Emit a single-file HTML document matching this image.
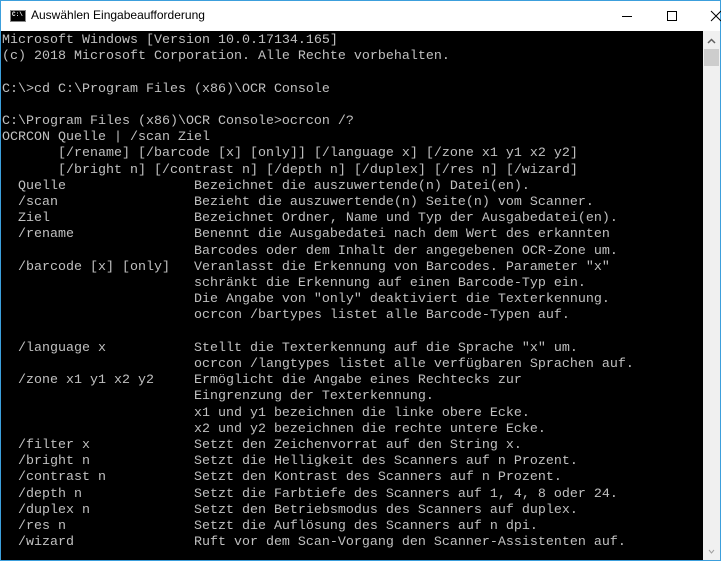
<!DOCTYPE html>
<html><head><meta charset="utf-8"><style>
html,body{margin:0;padding:0;width:721px;height:561px;overflow:hidden;background:#fff;}
.win{position:absolute;left:0;top:0;width:719px;height:559px;border:1px solid #3c9fdc;background:#fff;}
.title{position:absolute;left:0;top:0;width:719px;height:30px;background:#fff;}
.ttext{position:absolute;left:30px;top:7px;font:12px "Liberation Sans",sans-serif;color:#000;}
.icon{position:absolute;left:9px;top:9px;width:14px;height:10px;background:#000;border:1px solid #888;}
.icon span{position:absolute;left:1px;top:0;font:bold 6px "Liberation Mono",monospace;color:#fff;}
.con{position:absolute;left:0;top:30px;width:702px;height:529px;background:#000;overflow:hidden;}
pre{margin:0;position:absolute;left:1px;top:2px;font:13.33px/16.2px "Liberation Mono",monospace;color:#c0c0c0;}
.sb{position:absolute;left:702px;top:30px;width:17px;height:529px;background:#f0f0f0;}
.thumb{position:absolute;left:1px;top:18px;width:15px;height:17px;background:#cdcdcd;}
</style></head><body>
<div class="win">
<div class="title">
<div class="icon"><span>C:\</span></div>
<div class="ttext">Auswählen Eingabeaufforderung</div>
<svg style="position:absolute;left:540px;top:0" width="180" height="30">
<line x1="81" y1="15.5" x2="91" y2="15.5" stroke="#000" stroke-width="1"/>
<rect x="126.5" y="10.5" width="9" height="9" fill="none" stroke="#000"/>
<path d="M172 10 L182 20 M182 10 L172 20" stroke="#000" stroke-width="1" transform="translate(-2,0)"/>
</svg>
</div>
<div class="con"><pre>Microsoft Windows [Version 10.0.17134.165]
(c) 2018 Microsoft Corporation. Alle Rechte vorbehalten.

C:\&gt;cd C:\Program Files (x86)\OCR Console

C:\Program Files (x86)\OCR Console&gt;ocrcon /?
OCRCON Quelle | /scan Ziel
       [/rename] [/barcode [x] [only]] [/language x] [/zone x1 y1 x2 y2]
       [/bright n] [/contrast n] [/depth n] [/duplex] [/res n] [/wizard]
  Quelle                Bezeichnet die auszuwertende(n) Datei(en).
  /scan                 Bezieht die auszuwertende(n) Seite(n) vom Scanner.
  Ziel                  Bezeichnet Ordner, Name und Typ der Ausgabedatei(en).
  /rename               Benennt die Ausgabedatei nach dem Wert des erkannten
                        Barcodes oder dem Inhalt der angegebenen OCR-Zone um.
  /barcode [x] [only]   Veranlasst die Erkennung von Barcodes. Parameter "x"
                        schränkt die Erkennung auf einen Barcode-Typ ein.
                        Die Angabe von "only" deaktiviert die Texterkennung.
                        ocrcon /bartypes listet alle Barcode-Typen auf.

  /language x           Stellt die Texterkennung auf die Sprache "x" um.
                        ocrcon /langtypes listet alle verfügbaren Sprachen auf.
  /zone x1 y1 x2 y2     Ermöglicht die Angabe eines Rechtecks zur
                        Eingrenzung der Texterkennung.
                        x1 und y1 bezeichnen die linke obere Ecke.
                        x2 und y2 bezeichnen die rechte untere Ecke.
  /filter x             Setzt den Zeichenvorrat auf den String x.
  /bright n             Setzt die Helligkeit des Scanners auf n Prozent.
  /contrast n           Setzt den Kontrast des Scanners auf n Prozent.
  /depth n              Setzt die Farbtiefe des Scanners auf 1, 4, 8 oder 24.
  /duplex n             Setzt den Betriebsmodus des Scanners auf duplex.
  /res n                Setzt die Auflösung des Scanners auf n dpi.
  /wizard               Ruft vor dem Scan-Vorgang den Scanner-Assistenten auf.</pre></div>
<div class="sb">
<svg style="position:absolute;left:0;top:0" width="17" height="529">
<path d="M5 12 L8.5 8.5 L12 12" fill="none" stroke="#606060" stroke-width="1.5"/>
<path d="M6 519 L8.5 522 L11 519" fill="none" stroke="#a0a0a0" stroke-width="1"/>
</svg>
<div class="thumb"></div>
</div>
</div>
</body></html>
